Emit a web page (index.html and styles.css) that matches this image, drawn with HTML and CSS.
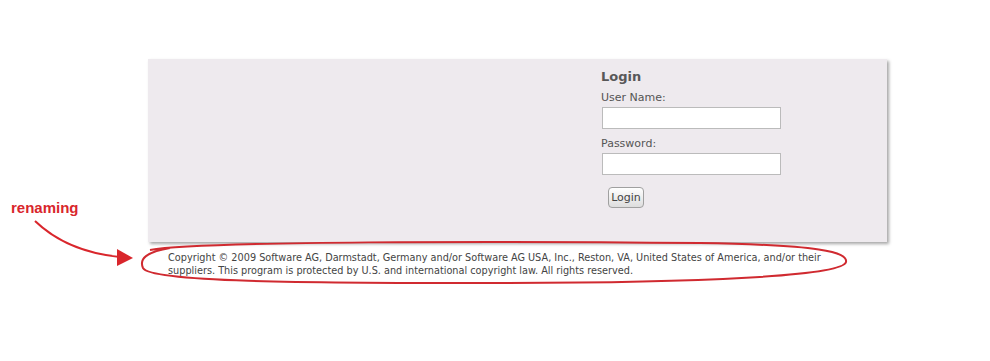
FILE: index.html
```html
<!DOCTYPE html>
<html lang="en">
  <head>
    <meta charset="utf-8">
    <title>Login</title>
    <link rel="stylesheet" href="styles.css">
  </head>
  <body>
    <div id="page">
      <div id="panel">
        <form id="login">
          <h2 class="title">Login</h2>
          <label for="user">User Name:</label>
          <input id="user" type="text">
          <label for="pass">Password:</label>
          <input id="pass" type="password">
          <button type="button">Login</button>
        </form>
      </div>
      <div id="copyright">
        Copyright &copy; 2009 Software AG, Darmstadt, Germany and/or Software AG USA, Inc., Reston, VA, United States of America, and/or their<br>
        suppliers. This program is protected by U.S. and international copyright law. All rights reserved.
      </div>
    </div>
    <div class="note">renaming</div>
    <svg class="markup" width="990" height="361" viewBox="0 0 990 361">
      <path d="M35 221 C 60 245, 90 254, 120 257" fill="none" stroke="#d9262c" stroke-width="2"/>
      <polygon points="117,249 133,258 117,266" fill="#d9262c"/>
      <path d="M150 250 C 200 241, 500 241, 700 243 C 820 245, 848 252, 846 262 C 843 276, 700 283, 494 283 C 300 283, 150 282, 143 268 C 139 259, 146 252, 170 248" fill="none" stroke="#d02a30" stroke-width="2"/>
    </svg>
  </body>
</html>
```

FILE: styles.css
```css
body {
  margin: 0;
  background: #FFFFFF;
  font-family: "DejaVu Sans", Verdana, sans-serif;
  font-size: 11px;
  color: #555555;
}

#page {
  padding: 59px 0 0 148px;
}

#panel {
  width: 739px;
  height: 183px;
  background: #EEEAEE;
  box-shadow: 2px 2px 3px rgba(0, 0, 0, 0.35);
  box-sizing: border-box;
  padding: 10px 0 0 453px;
}

#login {
  display: flex;
  flex-direction: column;
  align-items: flex-start;
}

#login .title {
  margin: 0 0 7px 0;
  font-size: 13px;
  font-weight: bold;
  color: #585858;
}

#login label {
  font-size: 11px;
  line-height: 13px;
  color: #555555;
  margin-bottom: 3px;
}

#login input {
  width: 179px;
  height: 22px;
  box-sizing: border-box;
  margin: 0 0 8px 1px;
  border: 1px solid #BBBBBB;
  background: #FFFFFF;
}

#login button {
  margin: 4px 0 0 7px;
  width: 36px;
  height: 21px;
  padding: 0;
  font-family: inherit;
  font-size: 11px;
  color: #444444;
  border: 1px solid #A0A0A0;
  border-radius: 4px;
  background: linear-gradient(#FFFFFF, #DDDDDD);
}

#copyright {
  padding: 9px 0 0 20px;
  white-space: nowrap;
  font-family: "DejaVu Sans Condensed", "DejaVu Sans", sans-serif;
  font-size: 10.8px;
  line-height: 13px;
  color: #444444;
}

.note {
  position: absolute;
  left: 11px;
  top: 199px;
  font-family: "Liberation Sans", Arial, sans-serif;
  font-size: 15px;
  font-weight: bold;
  color: #D9262C;
}

.markup {
  position: absolute;
  left: 0;
  top: 0;
  pointer-events: none;
}
```
